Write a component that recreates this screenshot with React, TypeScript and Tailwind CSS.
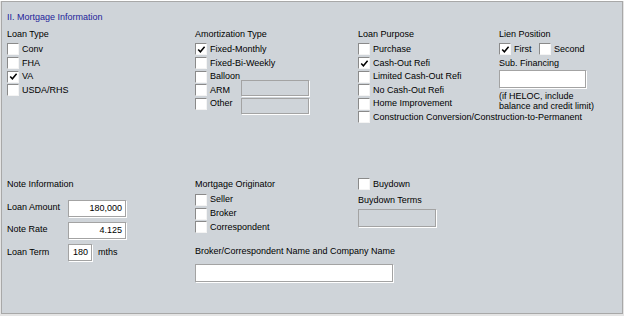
import React from 'react';

function Check({ checked }: { checked?: boolean }) {
  return (
    <span className="w-[12px] h-[12px] shrink-0 bg-white border border-t-[#8a8a8a] border-l-[#8a8a8a] border-b-[#f4f4f4] border-r-[#f4f4f4] flex items-center justify-center">
      {checked && (
        <svg width="9" height="9" viewBox="0 0 9 9">
          <path d="M1.2 4.4 L3.4 6.8 L7.6 1.8" fill="none" stroke="#000" strokeWidth="1.5" />
        </svg>
      )}
    </span>
  );
}

function CheckRow({ label, checked }: { label: string; checked?: boolean }) {
  return (
    <div className="h-[13.6px] flex items-center whitespace-nowrap">
      <Check checked={checked} />
      <span className="ml-[3px] leading-[11px]">{label}</span>
    </div>
  );
}

function Field({ className = '', value = '', disabled = false }: { className?: string; value?: string; disabled?: boolean }) {
  return (
    <div
      className={`${className} border border-[#a3a3a3] shadow-[1px_1px_0_#ffffff] flex items-center justify-end pr-[3px] leading-[11px] ${
        disabled ? 'bg-[#cfd4d9]' : 'bg-white'
      }`}
    >
      {value}
    </div>
  );
}

export default function App() {
  return (
    <div className="w-[624px] h-[316px] bg-[#e4e4e4] font-['Liberation_Sans',Arial,sans-serif] text-[9px] text-black">
      <div className="ml-px mt-px w-[622px] h-[313px] border border-[#a8a8a8] bg-[#cfd4d9] pl-[5px] pt-[9.5px]">
        <div className="h-[11px] leading-[11px] text-[#23239a]">II. Mortgage Information</div>

        {/* top block */}
        <div className="mt-[6px] h-[150px] flex">
          <div className="w-[188px]">
            <div className="h-[11px] leading-[11px]">Loan Type</div>
            <div className="mt-[3.2px]">
              <CheckRow label="Conv" />
              <CheckRow label="FHA" />
              <CheckRow label="VA" checked />
              <CheckRow label="USDA/RHS" />
            </div>
          </div>

          <div className="w-[163px]">
            <div className="h-[11px] leading-[11px]">Amortization Type</div>
            <div className="mt-[3.2px] flex">
              <div className="w-[46px]">
                <CheckRow label="Fixed-Monthly" checked />
                <CheckRow label="Fixed-Bi-Weekly" />
                <CheckRow label="Balloon" />
                <CheckRow label="ARM" />
                <CheckRow label="Other" />
              </div>
              <div className="mt-[37.5px] flex flex-col gap-[2px]">
                <Field className="w-[68px] h-[16px]" disabled />
                <Field className="w-[68px] h-[16px]" disabled />
              </div>
            </div>
          </div>

          <div className="w-[141px]">
            <div className="h-[11px] leading-[11px]">Loan Purpose</div>
            <div className="mt-[3.2px]">
              <CheckRow label="Purchase" />
              <CheckRow label="Cash-Out Refi" checked />
              <CheckRow label="Limited Cash-Out Refi" />
              <CheckRow label="No Cash-Out Refi" />
              <CheckRow label="Home Improvement" />
              <CheckRow label="Construction Conversion/Construction-to-Permanent" />
            </div>
          </div>

          <div className="flex-1">
            <div className="h-[11px] leading-[11px]">Lien Position</div>
            <div className="mt-[3.2px] h-[13.6px] flex items-center">
              <Check checked />
              <span className="ml-[3px] w-[25px] leading-[11px]">First</span>
              <Check />
              <span className="ml-[3px] leading-[11px]">Second</span>
            </div>
            <div className="h-[13.6px] flex items-center leading-[11px]">Sub. Financing</div>
            <Field className="w-[87px] h-[18px]" />
            <div className="mt-[3.5px] leading-[10px]">
              (if HELOC, include
              <br />
              balance and credit limit)
            </div>
          </div>
        </div>

        {/* bottom block */}
        <div className="flex">
          <div className="w-[188px]">
            <div className="h-[11px] leading-[11px]">Note Information</div>
            <div className="mt-[10.5px] flex flex-col gap-[5px]">
              <div className="flex items-start">
                <span className="w-[61px] pt-[1.5px] leading-[11px]">Loan Amount</span>
                <Field className="w-[58px] h-[17px]" value="180,000" />
              </div>
              <div className="flex items-start">
                <span className="w-[61px] pt-[1.5px] leading-[11px]">Note Rate</span>
                <Field className="w-[58px] h-[17px]" value="4.125" />
              </div>
              <div className="flex items-start">
                <span className="w-[61px] pt-[2.5px] leading-[11px]">Loan Term</span>
                <Field className="w-[24px] h-[17px]" value="180" />
                <span className="ml-[6px] pt-[2.5px] leading-[11px]">mths</span>
              </div>
            </div>
          </div>

          <div className="w-[163px]">
            <div className="h-[11px] leading-[11px]">Mortgage Originator</div>
            <div className="mt-[3.7px]">
              <CheckRow label="Seller" />
              <CheckRow label="Broker" />
              <CheckRow label="Correspondent" />
            </div>
            <div className="mt-[12.5px] h-[11px] leading-[11px] whitespace-nowrap">
              Broker/Correspondent Name and Company Name
            </div>
            <Field className="mt-[6.5px] w-[198px] h-[18px]" />
          </div>

          <div className="w-[141px]">
            <div className="h-[11px] flex items-center">
              <Check />
              <span className="ml-[3px] leading-[11px]">Buydown</span>
            </div>
            <div className="mt-[5px] h-[11px] leading-[11px]">Buydown Terms</div>
            <Field className="mt-[3.5px] w-[78px] h-[18px]" disabled />
          </div>
        </div>
      </div>
    </div>
  );
}
